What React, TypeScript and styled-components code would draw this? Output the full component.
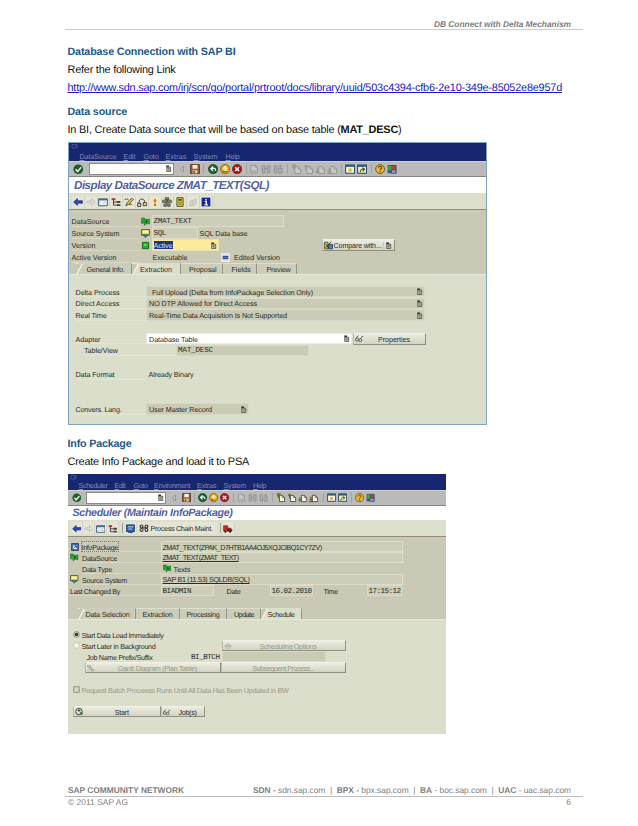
import { ReactNode, useLayoutEffect, useRef, useState } from "react";
import styled, { createGlobalStyle, css } from "styled-components";

const App = () => {
  return (
    <Page>
      <GlobalStyle />
      <Header>
        <Fit w={137}>DB Connect with Delta Mechanism</Fit>
      </Header>
      <Main>
        <Heading $mt={12.8}>
          <Fit w={168}>Database Connection with SAP BI</Fit>
        </Heading>
        <Paragraph>
          <Fit w={108}>Refer the following Link</Fit>
        </Paragraph>
        <Paragraph>
          <Link href="#">
            <Fit w={494.5}>
              http://www.sdn.sap.com/irj/scn/go/portal/prtroot/docs/library/uuid/503c4394-cfb6-2e10-349e-85052e8e957d
            </Fit>
          </Link>
        </Paragraph>
        <Heading $mt={6}>
          <Fit w={59.5}>Data source</Fit>
        </Heading>
        <Paragraph>
          <Fit w={334}>
            In BI, Create Data source that will be based on base table (<b>MAT_DESC</b>)
          </Fit>
        </Paragraph>
        <DataSourceScreen />
        <Heading $mt={9.9}>
          <Fit w={64}>Info Package</Fit>
        </Heading>
        <Paragraph>
          <Fit w={181.5}>Create Info Package and load it to PSA</Fit>
        </Paragraph>
        <SchedulerScreen />
      </Main>
      <Footer>
        <FooterTop>
          <b>
            <Fit w={116}>SAP COMMUNITY NETWORK</Fit>
          </b>
          <Fit w={318}>
            <b>SDN - </b>sdn.sap.com&nbsp; |&nbsp; <b>BPX - </b>bpx.sap.com&nbsp; |&nbsp; <b>BA</b> -
            boc.sap.com&nbsp; |&nbsp; <b>UAC</b> - uac.sap.com
          </Fit>
        </FooterTop>
        <FooterBottom>
          <Fit w={60}>© 2011 SAP AG</Fit>
          <span>6</span>
        </FooterBottom>
      </Footer>
    </Page>
  );
};

/* Tracks its text out or in so that it fills the given width */
const Fit = ({ w, ml, children }: { w: number; ml?: number; children: ReactNode }) => {
  const ref = useRef<HTMLSpanElement>(null);
  const [spacing, setSpacing] = useState<number>(0);
  useLayoutEffect(() => {
    const el = ref.current;
    if (!el) return;
    const count = (el.textContent || "").length;
    setSpacing((w - el.getBoundingClientRect().width) / count);
  }, [w]);
  return (
    <FitText ref={ref} $ml={ml} style={{ letterSpacing: `${spacing}px` }}>
      {children}
    </FitText>
  );
};

const MenuBar = ({ items, height, left }: { items: [string, number, number][]; height: number; left: number }) => (
  <Menu $h={height}>
    <WindowMark $h={height - 9}>
      <Icon name="window" size={8} />
    </WindowMark>
    <MenuItems $left={left}>
      {items.map(([label, w, gap]) => (
        <Fit key={label} w={w} ml={gap}>
          <u>{label[0]}</u>
          {label.slice(1)}
        </Fit>
      ))}
    </MenuItems>
  </Menu>
);

type BarProps = { slot: number; check: number; input: number; arrow: number; gaps: number[]; pages: string };

const CommandBar = ({ slot, check, input, arrow, gaps, pages }: BarProps) => (
  <Bar>
    <Slot $w={check}>
      <Icon name="check" size={slot - 1.5} />
    </Slot>
    <CommandInput $w={input}>
      <Icon name="list" size={7} />
    </CommandInput>
    <Slot $w={arrow}>
      <Icon name="triangle" size={8} />
    </Slot>
    <Slot $w={9}>
      <Icon name="save" size={slot - 2} />
    </Slot>
    {[
      ["back", "exit", "cancel"],
      ["print", "find", "findNext"],
      [pages + "First", pages + "Prev", pages + "Next", pages + "Last"],
      ["session", "shortcut"],
      ["help", "layout"],
    ].map((group, i) => (
      <Group key={i} $ml={gaps[i]}>
        {group.map((name) => (
          <Slot key={name} $w={slot}>
            <Icon name={name} size={slot - 1.8} />
          </Slot>
        ))}
      </Group>
    ))}
  </Bar>
);

const DataSourceScreen = () => (
  <Screen $w={419} $h={283} $mt={2} $framed>
    <MenuBar
      height={18}
      left={11}
      items={[
        ["DataSource", 37, 0],
        ["Edit", 12, 7],
        ["Goto", 15, 8],
        ["Extras", 21, 7],
        ["System", 24, 7],
        ["Help", 14, 8],
      ]}
    />
    <CommandBar slot={12} check={20} input={85} arrow={17} gaps={[7.5, 5, 6.5, 5.5, 6.5]} pages="dim" />
    <Title $h={16} $size={11.6}>
      <Fit w={195} ml={5.5}>
        Display DataSource ZMAT_TEXT(SQL)
      </Fit>
    </Title>
    <ToolBar $h={17}>
      {["left", "rightDim", "table", "tree", "pencil", "lock", "bang", "network", "calc", "ghost", "info"].map((name) => (
        <ToolSlot key={name} $w={12.8}>
          <Icon name={name} size={10} />
        </ToolSlot>
      ))}
    </ToolBar>
    <Form $h={63.5} $pt={5}>
      <Row $h={12}>
        <Label $ml={3} $w={68}>
          <Fit w={38}>DataSource</Fit>
        </Label>
        <Slot $w={12}>
          <Icon name="source" size={9} />
        </Slot>
        <Field $w={132}>
          <Mono>
            <Fit w={38}>ZMAT_TEXT</Fit>
          </Mono>
        </Field>
      </Row>
      <Row $h={12}>
        <Label $ml={3} $w={68}>
          <Fit w={48}>Source System</Fit>
        </Label>
        <Slot $w={12}>
          <Icon name="system" size={9} />
        </Slot>
        <Field $w={46}>
          <Mono>
            <Fit w={12.5}>SQL</Fit>
          </Mono>
        </Field>
        <Fit w={48} ml={2}>
          SQL Data base
        </Fit>
      </Row>
      <Row $h={12}>
        <Label $ml={3} $w={68}>
          <Fit w={24}>Version</Fit>
        </Label>
        <Slot $w={12}>
          <Icon name="active" size={9} />
        </Slot>
        <Field $w={67} $tone="edit">
          <Selected>
            <Fit w={19}>Active</Fit>
          </Selected>
          <Icon name="list" size={7} />
        </Field>
        <Button $w={73} $ml={103} $h={12}>
          <Icon name="compare" size={9} />
          <Fit w={48}>Compare with...</Fit>
          <ListButton>
            <Icon name="list" size={7} />
          </ListButton>
        </Button>
      </Row>
      <Row $h={12}>
        <Label $ml={3} $w={68}>
          <Fit w={45}>Active Version</Fit>
        </Label>
        <Fit w={35} ml={13}>
          Executable
        </Fit>
        <Slot $w={12} $ml={32}>
          <Icon name="edited" size={9} />
        </Slot>
        <Fit w={46} ml={2.5}>
          Edited Version
        </Fit>
      </Row>
      <Tabs $pl={7}>
        <Tab $w={56} $pl={11} $slant>
          <Fit w={38}>General Info.</Fit>
        </Tab>
        <Tab $w={49} $pl={8.5} $slant $active>
          <Fit w={32}>Extraction</Fit>
        </Tab>
        <Tab $w={42} $pl={8.5}>
          <Fit w={27.5}>Proposal</Fit>
        </Tab>
        <Tab $w={34} $pl={9}>
          <Fit w={19}>Fields</Fit>
        </Tab>
        <Tab $w={40} $pl={10}>
          <Fit w={24}>Preview</Fit>
        </Tab>
      </Tabs>
    </Form>
    <Panel $pt={11}>
      <Row $h={11.75}>
        <Label $ml={7} $w={70}>
          <Fit w={44}>Delta Process</Fit>
        </Label>
        <Field $w={279} $tone="dark" $pl={5.5}>
          <Fit w={161}>Full Upload (Delta from InfoPackage Selection Only)</Fit>
          <Icon name="list" size={7} />
        </Field>
      </Row>
      <Row $h={11.75}>
        <Label $ml={7} $w={70}>
          <Fit w={44}>Direct Access</Fit>
        </Label>
        <Field $w={279} $tone="dark" $pl={2.5}>
          <Fit w={108}>NO DTP Allowed for Direct Access</Fit>
          <Icon name="list" size={7} />
        </Field>
      </Row>
      <Row $h={11.75}>
        <Label $ml={7} $w={70}>
          <Fit w={31}>Real Time</Fit>
        </Label>
        <Field $w={279} $tone="dark" $pl={2.5}>
          <Fit w={138}>Real-Time Data Acquisition Is Not Supported</Fit>
          <Icon name="list" size={7} />
        </Field>
      </Row>
      <Row $h={11.75} />
      <Row $h={11.75}>
        <Label $ml={7} $w={70}>
          <Fit w={25}>Adapter</Fit>
        </Label>
        <Field $w={206} $tone="white" $pl={2.5}>
          <Fit w={49}>Database Table</Fit>
          <Icon name="list" size={7} />
        </Field>
        <Button $w={73} $ml={1} $h={12}>
          <Icon name="glasses" size={9} />
          <Grow>
            <Fit w={32}>Properties</Fit>
          </Grow>
        </Button>
      </Row>
      <Row $h={11.75}>
        <Label $ml={15.5} $w={92}>
          <Fit w={34}>Table/View</Fit>
        </Label>
        <Field $w={133} $tone="dark">
          <Mono>
            <Fit w={35}>MAT_DESC</Fit>
          </Mono>
        </Field>
      </Row>
      <Row $h={11.75} />
      <Row $h={11.75}>
        <Label $ml={7} $w={70}>
          <Fit w={39}>Data Format</Fit>
        </Label>
        <Fit w={45} ml={3}>
          Already Binary
        </Fit>
      </Row>
      <Row $h={11.75} />
      <Row $h={11.75} />
      <Row $h={11.75}>
        <Label $ml={7} $w={70}>
          <Fit w={46}>Convers. Lang.</Fit>
        </Label>
        <Field $w={103} $tone="dark" $pl={2.5}>
          <Fit w={63}>User Master Record</Fit>
          <Icon name="list" size={7} />
        </Field>
      </Row>
    </Panel>
  </Screen>
);

const SchedulerScreen = () => (
  <Screen $w={378} $h={260} $mt={2.8}>
    <MenuBar
      height={16}
      left={11}
      items={[
        ["Scheduler", 29, 0],
        ["Edit", 11, 7],
        ["Goto", 14, 8],
        ["Environment", 36, 6.5],
        ["Extras", 19, 7],
        ["System", 22.5, 7.5],
        ["Help", 13, 7],
      ]}
    />
    <CommandBar slot={11} check={18} input={80} arrow={16} gaps={[7, 5.5, 6.5, 6.5, 6.5]} pages="page" />
    <Title $h={14} $size={10.7}>
      <Fit w={160} ml={5}>
        Scheduler (Maintain InfoPackage)
      </Fit>
    </Title>
    <ToolBar $h={16.5}>
      {["left", "rightDim", "table", "tree"].map((name) => (
        <ToolSlot key={name} $w={12}>
          <Icon name={name} size={9.5} />
        </ToolSlot>
      ))}
      <Group $ml={5.5}>
        <ToolSlot $w={12}>
          <Icon name="monitor" size={9} />
        </ToolSlot>
        <ChainButton>
          <Icon name="chain" size={10} />
          <Fit w={62}>Process Chain Maint.</Fit>
        </ChainButton>
      </Group>
      <Group $ml={6}>
        <ToolSlot $w={12}>
          <Icon name="truck" size={9.5} />
        </ToolSlot>
      </Group>
    </ToolBar>
    <Form $h={82} $pt={4.5}>
      <Row $h={11}>
        <Slot $w={14}>
          <Icon name="package" size={8} />
        </Slot>
        <Label $w={79}>
          <Focused>
            <Fit w={36.5}>InfoPackage</Fit>
          </Focused>
        </Label>
        <Field $w={242}>
          <Fit w={159}>ZMAT_TEXT(ZPAK_D7HTB1AA4OJ5XQJCIBQ1CY7ZV)</Fit>
        </Field>
      </Row>
      <Row $h={11}>
        <Slot $w={14}>
          <Icon name="source" size={8.5} />
        </Slot>
        <Label $w={79}>
          <Fit w={35} ml={0.5}>
            DataSource
          </Fit>
        </Label>
        <Field $w={242}>
          <u>
            <Fit w={76}>ZMAT_TEXT(ZMAT_TEXT)</Fit>
          </u>
        </Field>
      </Row>
      <Row $h={11}>
        <Label $ml={14} $w={79}>
          <Fit w={30} ml={0.5}>
            Data Type
          </Fit>
        </Label>
        <Slot $w={13}>
          <Icon name="source" size={8.5} />
        </Slot>
        <Fit w={17}>Texts</Fit>
      </Row>
      <Row $h={11}>
        <Slot $w={14}>
          <Icon name="system" size={8.5} />
        </Slot>
        <Label $w={79}>
          <Fit w={45} ml={0.5}>
            Source System
          </Fit>
        </Label>
        <Field $w={242}>
          <u>
            <Fit w={87}>SAP B1 (11.53) SQLDB(SQL)</Fit>
          </u>
        </Field>
      </Row>
      <Row $h={11}>
        <Label $ml={2.5} $w={90.5}>
          <Fit w={50}>Last Changed By</Fit>
        </Label>
        <Field $w={53}>
          <Mono>
            <Fit w={28.5}>BIADMIN</Fit>
          </Mono>
        </Field>
        <Fit w={14} ml={13}>
          Date
        </Fit>
        <Field $w={43} $ml={29}>
          <Mono>
            <Fit w={40}>16.02.2010</Fit>
          </Mono>
        </Field>
        <Fit w={14} ml={11}>
          Time
        </Fit>
        <Field $w={35} $ml={29}>
          <Mono>
            <Fit w={32}>17:15:12</Fit>
          </Mono>
        </Field>
      </Row>
      <Tabs $pl={10}>
        <Tab $w={58.5} $pl={8} $slant>
          <Fit w={44}>Data Selection</Fit>
        </Tab>
        <Tab $w={43.5} $pl={6.5}>
          <Fit w={30}>Extraction</Fit>
        </Tab>
        <Tab $w={47} $pl={7}>
          <Fit w={33}>Processing</Fit>
        </Tab>
        <Tab $w={34} $pl={7.5}>
          <Fit w={20}>Update</Fit>
        </Tab>
        <Tab $w={41.5} $pl={7} $slant $active>
          <Fit w={27}>Schedule</Fit>
        </Tab>
      </Tabs>
    </Form>
    <Panel $pt={9.5}>
      <Row $h={11}>
        <Slot $w={14} $ml={2}>
          <Icon name="radioOn" size={7} />
        </Slot>
        <Fit w={82} ml={-2}>
          Start Data Load Immediately
        </Fit>
      </Row>
      <Row $h={11}>
        <Slot $w={14} $ml={2}>
          <Icon name="radioOff" size={7} />
        </Slot>
        <Fit w={74} ml={-2}>
          Start Later in Background
        </Fit>
        <Button $w={124} $ml={66} $h={11} $disabled>
          <Icon name="clockDim" size={8} />
          <Grow>
            <Fit w={57}>Scheduling Options</Fit>
          </Grow>
        </Button>
      </Row>
      <Row $h={11}>
        <Fit w={66} ml={19}>
          Job Name Prefix/Suffix
        </Fit>
        <Mono>
          <Fit w={28.5} ml={38.5}>
            BI_BTCH
          </Fit>
        </Mono>
        <Field $w={104} $ml={2} $tone="dark" />
      </Row>
      <Row $h={11}>
        <Button $w={136.5} $ml={17} $h={11} $disabled>
          <Icon name="gantt" size={8} />
          <Grow>
            <Fit w={79}>Gantt Diagram (Plan Table)</Fit>
          </Grow>
        </Button>
        <Button $w={124.5} $h={11} $disabled>
          <Grow>
            <Fit w={62}>Subsequent Process...</Fit>
          </Grow>
        </Button>
      </Row>
      <Row $h={11} />
      <Row $h={11}>
        <Slot $w={14} $ml={2}>
          <Icon name="checkbox" size={7} />
        </Slot>
        <Dim>
          <Fit w={207} ml={-2}>
            Request Batch Proceess Runs Until All Data Has Been Updated in BW
          </Fit>
        </Dim>
      </Row>
      <Row $h={11} />
      <Row $h={11}>
        <Button $w={88.5} $ml={5} $h={11}>
          <Icon name="clock" size={9} />
          <Grow>
            <Fit w={14}>Start</Fit>
          </Grow>
        </Button>
        <Button $w={44} $h={11}>
          <Icon name="glasses" size={8} />
          <Grow>
            <Fit w={18}>Job(s)</Fit>
          </Grow>
        </Button>
      </Row>
    </Panel>
  </Screen>
);

const page = (stroke: string, fill: string, mark: ReactNode) => (
  <g>
    <path d="M6 4h5l4 4v7H6z" fill={fill} stroke={stroke} strokeWidth="1.3" />
    <path d="M11 4v4h4" fill="none" stroke={stroke} />
    {mark}
  </g>
);

const marks: Record<string, string> = {
  First: "M1 1.5h7M4.5 3v6M2 6l2.5-3L7 6",
  Prev: "M4.5 2v7M2 5l2.5-3L7 5",
  Next: "M3.5 7v7M1 11l2.5 3L6 11",
  Last: "M0 15h7M3.5 6v7M1 10l2.5 3L6 10",
};

const icons: Record<string, ReactNode> = {
  window: <path d="M2 3h8v7H2zM10 5l4-2M10 8h4" fill="none" stroke="#5a68a8" strokeWidth="1.2" />,
  check: (
    <g>
      <circle cx="8" cy="8" r="7.3" fill="#1d5b2c" />
      <path d="M4 8l3 3.5L12.5 5" fill="none" stroke="#d9f2d0" strokeWidth="2.4" />
    </g>
  ),
  list: (
    <g>
      <path d="M3 1h6v4H3z" fill="#33332b" />
      <path d="M4 5h9v10H4z" fill="#d9dac8" stroke="#33332b" strokeWidth="1.6" />
      <path d="M6 8.5h5M6 11.5h5" stroke="#33332b" strokeWidth="1.5" />
    </g>
  ),
  triangle: <path d="M11 2v12L5 8z" fill="#c9c9c9" stroke="#858585" strokeWidth="1.4" />,
  save: (
    <g>
      <path d="M1 1h14v14H1z" fill="#a65b31" stroke="#4a2b1c" strokeWidth="1.4" />
      <path d="M4 1.5h8v6H4z" fill="#f2efdb" />
      <path d="M4 10h8v5H4z" fill="#e2c9a9" />
      <path d="M5.5 11h2v3h-2z" fill="#4a2b1c" />
    </g>
  ),
  back: (
    <g>
      <circle cx="8" cy="8" r="7.3" fill="#17632b" stroke="#123c1c" />
      <path d="M12 10.5c0-4-2-4.5-7-3M8 4L4.5 7.6 8 11" fill="none" stroke="#fff" strokeWidth="2" />
    </g>
  ),
  exit: (
    <g>
      <circle cx="8" cy="8" r="7.3" fill="#e3a513" stroke="#6b4a10" />
      <path d="M4.5 8L8 4l3.5 4M8 5v6h4" fill="none" stroke="#fff8d0" strokeWidth="2" />
      <path d="M4 12h8" stroke="#6b4a10" strokeWidth="1.5" />
    </g>
  ),
  cancel: (
    <g>
      <circle cx="8" cy="8" r="7.3" fill="#b3151c" stroke="#5c1015" />
      <path d="M5 5l6 6M11 5l-6 6" stroke="#fff" strokeWidth="2.2" />
    </g>
  ),
  print: <path d="M3 2h7l3 3v9H3zM10 2v3h3M5 11h6" fill="#c9c9c9" stroke="#8d8d8d" strokeWidth="1.3" />,
  find: <path d="M2 3h4v11H2zM10 3h4v11h-4zM6 7h4M3 9h2M11 9h2" fill="#b3b3b3" stroke="#8d8d8d" strokeWidth="1.4" />,
  findNext: <path d="M2 3h4v11H2zM9 7h5v7H9zM11.5 1v5M9 3.5h5" fill="#b3b3b3" stroke="#8d8d8d" strokeWidth="1.4" />,
  session: (
    <g>
      <path d="M1 1.5h14v13H1z" fill="#f6f6e6" stroke="#244a6d" strokeWidth="1.6" />
      <path d="M1 1.5h14v3H1z" fill="#2b5a86" />
      <path d="M8 6v7M4.5 9.5h7M5.5 7l5 5M10.5 7l-5 5" stroke="#d8b71a" strokeWidth="1.5" />
    </g>
  ),
  shortcut: (
    <g>
      <path d="M1 1.5h14v13H1z" fill="#f0efc0" stroke="#244a6d" strokeWidth="1.6" />
      <path d="M1 1.5h14v3H1z" fill="#2b5a86" />
      <path d="M5 13c0-4 2-5 6-5M8 6l4 2-3 3.5" fill="none" stroke="#55521c" strokeWidth="1.6" />
    </g>
  ),
  help: (
    <g>
      <circle cx="8" cy="8" r="7" fill="#e7b834" stroke="#6b5218" strokeWidth="1.4" />
      <path d="M5.5 6c0-3.4 5.4-3 5 0-.3 1.6-2.5 1.6-2.5 4M8 11.3v1.7" fill="none" stroke="#5a3c0c" strokeWidth="1.7" />
    </g>
  ),
  layout: (
    <g>
      <path d="M1 1.5h14v13H1z" fill="#4a5560" />
      <path d="M2 3h5v7H2z" fill="#2fae44" />
      <path d="M8 3h5v5H8z" fill="#c23a3a" />
      <path d="M7 9h7v6H7z" fill="#8d92c8" stroke="#3a3f78" />
    </g>
  ),
  left: <path d="M1 8l6-5.5V6h8v4H7v3.5z" fill="#2a48c8" stroke="#10206b" />,
  rightDim: <path d="M15 8L9 3v3.5H2v3h7V13z" fill="#dfe1d8" stroke="#b1b5ac" />,
  table: (
    <g>
      <path d="M1 3h14v11H1z" fill="#fbfbf2" stroke="#3b5578" strokeWidth="1.5" />
      <path d="M1 3h14v2.5H1z" fill="#3f679c" />
      <path d="M2 8h2.5M2 11h2.5M7 8h6M7 11h6" stroke="#9cb0be" />
    </g>
  ),
  tree: (
    <g>
      <path d="M1 2h6v3H1z" fill="#b23325" />
      <path d="M4 5v8h5M4 8h5" fill="none" stroke="#222" strokeWidth="1.3" />
      <path d="M9 6.5h6v3H9zM9 11.5h6v3H9z" fill="#4a4238" />
    </g>
  ),
  pencil: (
    <g>
      <path d="M3 14l2-5 7-7 3 2-8 8z" fill="#e6c64b" stroke="#39351f" strokeWidth="1.2" />
      <path d="M1 5c2-3 4-3 6 0M8 13c2-3 4-2 5 0" fill="none" stroke="#39351f" strokeWidth="1.4" />
    </g>
  ),
  lock: (
    <g>
      <path d="M1 10h5v5H1zM10 9h5v5h-5z" fill="#e4dfa0" stroke="#33331f" strokeWidth="1.4" />
      <path d="M3 10c0-6 4-8 7-6s2 3 2 5" fill="none" stroke="#33331f" strokeWidth="1.5" />
    </g>
  ),
  bang: (
    <g>
      <path d="M3 1h10v14H3z" fill="#f3e6b4" />
      <path d="M8 2l2 3-1.2 5H7.2L6 5z" fill="#d9701e" />
      <circle cx="8" cy="12.6" r="1.5" fill="#7e3a10" />
    </g>
  ),
  network: (
    <g>
      <path d="M1 5h6v4H1zM5 1h6v3H5zM9 5h6v4H9zM3 11h4v4H3zM9 11h4v4H9z" fill="#8d866e" stroke="#3c392e" />
      <path d="M8 4v8" stroke="#3c392e" strokeWidth="1.5" />
    </g>
  ),
  calc: (
    <g>
      <path d="M3 1h10v14H3z" fill="#e0c62c" stroke="#44431e" strokeWidth="1.3" />
      <path d="M5 3h6v3H5z" fill="#41633b" />
      <path d="M5 8.5h6M5 11.5h6" stroke="#8a8426" strokeWidth="1.5" />
    </g>
  ),
  ghost: <path d="M3 14V8l4-3v9zM9 14V5l4-2v8z" fill="#d6d8ca" stroke="#b5b7a8" />,
  info: (
    <g>
      <path d="M1 1h14v14H1z" fill="#1527a0" />
      <path d="M8 3v2.2M6 7h2.5v5M5.5 12.5h5.5" fill="none" stroke="#fff" strokeWidth="2.2" />
    </g>
  ),
  source: (
    <g>
      <path d="M1 2h5v2h9v8H9l-3 3v-4H1z" fill="#26a835" stroke="#135c1d" />
      <path d="M8 5.5l4 2.5-4 2.5z" fill="#0e3f17" />
    </g>
  ),
  system: (
    <g>
      <path d="M1 1h14v10H1z" fill="#e9df56" stroke="#4a4a34" strokeWidth="1.5" />
      <path d="M4 3h8v4H4z" fill="#f7f4cf" />
      <path d="M8 15.5L3 10h10z" fill="#2f8f6e" stroke="#27455b" />
    </g>
  ),
  active: (
    <g>
      <path d="M2.5 2.5h11v11h-11z" fill="#1fae32" stroke="#135c1d" strokeWidth="1.5" />
      <path d="M5 5h5v4H5z" fill="#55dd60" />
    </g>
  ),
  edited: (
    <g>
      <path d="M0 0h16v16H0z" fill="#e2e8ea" />
      <path d="M3 5h10v6H3z" fill="#294a80" />
      <path d="M3 8h10" stroke="#8fa9cc" />
    </g>
  ),
  compare: (
    <g>
      <path d="M1 2h6v12H1z" fill="#dfcf3a" stroke="#33331f" strokeWidth="1.3" />
      <path d="M8 6h7v8H8z" fill="#4a7fae" stroke="#1f3147" strokeWidth="1.3" />
      <path d="M3 12L13 1M3 5l5 7" stroke="#1e3a28" strokeWidth="1.5" />
    </g>
  ),
  glasses: (
    <g fill="none" stroke="#3a3a30" strokeWidth="1.3">
      <circle cx="3.5" cy="10" r="2.8" />
      <circle cx="9.5" cy="11" r="2.6" />
      <path d="M2 7.5L5.5 3M10 8.5l3-4.5 2 1" />
    </g>
  ),
  monitor: (
    <g>
      <path d="M1 1.5h14v12H1z" fill="#2f62ae" stroke="#173060" strokeWidth="1.4" />
      <path d="M3 5h10M4 9h7" stroke="#cfe0f6" strokeWidth="1.6" />
      <path d="M4 15h8" stroke="#173060" strokeWidth="1.5" />
    </g>
  ),
  chain: (
    <g fill="none" stroke="#33332b" strokeWidth="1.8">
      <circle cx="4" cy="5.5" r="2.3" />
      <circle cx="4" cy="11" r="2.3" />
      <circle cx="12" cy="5.5" r="2.3" />
      <circle cx="12" cy="11" r="2.3" />
      <path d="M6 8h4" />
    </g>
  ),
  truck: (
    <g>
      <path d="M1 3h7v9H1z" fill="#b3332a" stroke="#5b1a15" />
      <path d="M8 7h5l2 2.5V12H8z" fill="#7c211b" stroke="#3e1411" />
      <circle cx="4" cy="13" r="1.8" fill="#26221c" />
      <circle cx="12" cy="13" r="1.8" fill="#26221c" />
    </g>
  ),
  package: (
    <g>
      <path d="M1 1h14v14H1z" fill="#3d6fb4" stroke="#1b3564" strokeWidth="1.5" />
      <path d="M4 5h8v7H4z" fill="#e8eef8" />
      <path d="M5 11l5-5M7 6h4v4" fill="none" stroke="#1b3564" strokeWidth="1.5" />
    </g>
  ),
  radioOn: (
    <g>
      <circle cx="8" cy="8" r="6.5" fill="#e4e5d8" stroke="#77776c" strokeWidth="1.8" />
      <circle cx="8" cy="8" r="4" fill="#33332b" />
    </g>
  ),
  radioOff: <circle cx="8" cy="8" r="6.5" fill="#f7f7ef" stroke="#bcbca9" strokeWidth="1.5" />,
  checkbox: <path d="M1.5 1.5h13v13h-13z" fill="#d3d5c0" stroke="#8c8d7d" strokeWidth="2" />,
  clock: (
    <g fill="none" stroke="#2f2f27" strokeWidth="1.5">
      <circle cx="7" cy="8" r="5.8" />
      <path d="M7 4v4.5M4.5 6h5" />
      <path d="M9 8l6 3-5 4z" fill="#2b7a35" stroke="none" />
    </g>
  ),
  clockDim: (
    <g fill="none" stroke="#a3a493" strokeWidth="1.4">
      <circle cx="8" cy="8" r="4.5" />
      <path d="M0 8h16M8 6v3" />
    </g>
  ),
  gantt: <path d="M1 3h6v3H1zM4 7h6v3H4zM8 11h6v3H8z" fill="#d8d9ca" stroke="#989988" strokeWidth="1.2" />,
};

Object.keys(marks).forEach((key) => {
  icons["page" + key] = page("#37352a", "#f4f3e4", <path d={marks[key]} fill="none" stroke="#6d6718" strokeWidth="2" />);
  icons["dim" + key] = page("#8d8d8a", "#c9c9c9", <path d={marks[key]} fill="none" stroke="#8d8d80" strokeWidth="1.3" />);
});

const Icon = ({ name, size }: { name: string; size: number }) => (
  <Svg width={size} height={size} viewBox="0 0 16 16">
    {icons[name]}
  </Svg>
);

const GlobalStyle = createGlobalStyle`
  * {
    box-sizing: border-box;
  }
  body {
    margin: 0;
    background: #ffffff;
  }
`;
const Page = styled.div`
  display: flex;
  flex-direction: column;
  width: 638px;
  height: 826px;
  overflow: hidden;
  font-family: "Liberation Sans", Arial, sans-serif;
  text-rendering: geometricPrecision;
`;
const Header = styled.header`
  display: flex;
  justify-content: flex-end;
  height: 30px;
  margin: 0 55px 0 65px;
  padding: 19px 12px 0 0;
  border-bottom: 1px solid #cccccc;

  font-size: 8.4px;
  font-style: italic;
  font-weight: 700;
  line-height: 10px;
  color: #7d7d7d;
`;
const Main = styled.main`
  flex: 1;
  padding-left: 67.5px;
`;
const Heading = styled.h2<{ $mt: number }>`
  height: 18px;
  margin: ${({ $mt }) => $mt}px 0 0;

  font-size: 10.7px;
  font-weight: 700;
  line-height: 18px;
  color: #20598c;
`;
const Paragraph = styled.p`
  height: 18.3px;
  margin: 0;

  font-size: 10.9px;
  line-height: 18.3px;
  color: #111111;
`;
const Link = styled.a`
  color: #1a1acc;
`;
const FitText = styled.span<{ $ml?: number }>`
  flex: none;
  margin-left: ${({ $ml }) => $ml || 0}px;
  white-space: nowrap;
`;
const Svg = styled.svg`
  display: block;
  flex: none;
`;
const Footer = styled.footer`
  height: 41px;
  margin: 0 55px 0 65px;

  font-size: 8.4px;
  line-height: 11px;
  color: #808080;
`;
const FooterTop = styled.div`
  display: flex;
  justify-content: space-between;
  height: 12px;
  padding: 0 12px 0 3px;
  border-bottom: 1px solid #bdbdbd;
`;
const FooterBottom = styled.div`
  display: flex;
  justify-content: space-between;
  padding: 0 12px 0 3px;
`;

/* SAP window */
const Screen = styled.section<{ $w: number; $h: number; $mt: number; $framed?: boolean }>`
  display: flex;
  flex-direction: column;
  width: ${({ $w }) => $w}px;
  height: ${({ $h }) => $h}px;
  margin-top: ${({ $mt }) => $mt}px;
  overflow: hidden;
  border: ${({ $framed }) => ($framed ? "1px solid #7fa3c2" : "none")};
  background: #dbdeca;

  font-size: 7.2px;
  line-height: 9px;
  color: #2c2c26;

  ${FitText} {
    padding-top: 1px;
  }
`;
const Menu = styled.div<{ $h: number }>`
  flex: none;
  height: ${({ $h }) => $h}px;
  background: #17276f;
  color: #7d88bd;
`;
const WindowMark = styled.div<{ $h: number }>`
  height: ${({ $h }) => $h}px;
  padding-left: 2px;
`;
const MenuItems = styled.div<{ $left: number }>`
  display: flex;
  padding-left: ${({ $left }) => $left}px;
  line-height: 8px;
`;
const Bar = styled.div`
  display: flex;
  align-items: center;
  flex: none;
  height: 16.5px;
  background: #bababa;
  border-top: 1px solid #d0d0d0;
  border-bottom: 1.5px solid #85857f;
`;
const Slot = styled.div<{ $w: number; $ml?: number }>`
  display: flex;
  justify-content: center;
  align-items: center;
  flex: none;
  width: ${({ $w }) => $w}px;
  margin-left: ${({ $ml }) => $ml || 0}px;
`;
const CommandInput = styled.div<{ $w: number }>`
  display: flex;
  justify-content: flex-end;
  align-items: center;
  flex: none;
  width: ${({ $w }) => $w}px;
  height: 12.5px;
  padding-right: 1px;
  background: #ffffff;
  border: 1px solid #8a8a8a;
`;
const Group = styled.div<{ $ml: number }>`
  display: flex;
  align-items: center;
  flex: none;
  padding-left: ${({ $ml }) => $ml}px;
  background: linear-gradient(#a2a39a, #a2a39a) ${({ $ml }) => $ml / 2}px 50% / 1px 10px no-repeat;
`;
const Title = styled.div<{ $h: number; $size: number }>`
  display: flex;
  align-items: center;
  flex: none;
  height: ${({ $h }) => $h}px;
  background: #ffffff;

  font-size: ${({ $size }) => $size}px;
  font-style: italic;
  font-weight: 700;
  color: #5362a3;
`;
const ToolBar = styled.div<{ $h: number }>`
  display: flex;
  align-items: center;
  flex: none;
  height: ${({ $h }) => $h}px;
  padding-top: 1px;
  padding-left: 3.5px;
  background: #dcdfcc;
  border-bottom: 1px solid #8d8e80;
`;
const ToolSlot = styled(Slot)`
  height: 12px;
  background: #e4e5d7;
  border-right: 1px solid #d3d5c1;
`;
const ChainButton = styled.div`
  display: flex;
  align-items: center;
  gap: 2px;
  width: 80px;
  height: 12px;
  padding-left: 2px;
  background: #e3e4d6;
`;
const Form = styled.div<{ $h: number; $pt: number }>`
  display: flex;
  flex-direction: column;
  flex: none;
  height: ${({ $h }) => $h}px;
  padding-top: ${({ $pt }) => $pt}px;
  background: #c9c9b6;
`;
const Panel = styled.div<{ $pt: number }>`
  flex: 1;
  padding-top: ${({ $pt }) => $pt}px;
  background: #dbdeca;
  border-top: 1px solid #e6e7d9;
`;
const Row = styled.div<{ $h: number }>`
  display: flex;
  align-items: center;
  flex: none;
  height: ${({ $h }) => $h}px;
`;
const Label = styled.div<{ $w: number; $ml?: number }>`
  display: flex;
  align-items: center;
  flex: none;
  width: ${({ $w }) => $w}px;
  height: 100%;
  margin-left: ${({ $ml }) => $ml || 0}px;
  box-shadow: inset 0 -1px rgba(238, 238, 222, 0.45);
`;
const tones = {
  plain: css`
    background: #cdceb9;
    border: 1px solid #dddcc9;
  `,
  dark: css`
    background: #cacbb4;
    border: 1px solid #d9dac6;
  `,
  edit: css`
    background: #fdeb9c;
    border: 1px solid #e6dfb0;
  `,
  white: css`
    background: #ffffff;
    border: 1px solid #ecede0;
  `,
};
const Field = styled.div<{ $w: number; $ml?: number; $pl?: number; $tone?: keyof typeof tones }>`
  display: flex;
  justify-content: space-between;
  align-items: center;
  flex: none;
  width: ${({ $w }) => $w}px;
  height: calc(100% - 0.5px);
  margin-left: ${({ $ml }) => $ml || 0}px;
  padding: 0 1px 0 ${({ $pl }) => $pl || 1}px;
  ${({ $tone }) => tones[$tone || "plain"]}
`;
const Mono = styled.span`
  display: flex;
  padding-top: 2px;
  font-family: "Liberation Mono", "Courier New", monospace;
  font-size: 7.6px;
`;
const Selected = styled.span`
  display: flex;
  height: 8px;
  background: #1d3478;
  color: #dfe4f5;
  line-height: 8px;
`;
const Focused = styled.span`
  display: flex;
  height: 9px;
  outline: 1px dotted #77776a;
`;
const Button = styled.button<{ $w: number; $h: number; $ml?: number; $disabled?: boolean }>`
  display: flex;
  align-items: center;
  gap: 1px;
  flex: none;
  width: ${({ $w }) => $w}px;
  height: ${({ $h }) => $h}px;
  margin-left: ${({ $ml }) => $ml || 0}px;
  padding: 0 1px;
  border: 1px solid;
  border-color: #f1f1e6 #8f907f #8f907f #b9baa8;
  background: linear-gradient(#ecede2, #d2d4c2);

  font: inherit;
  color: ${({ $disabled }) => ($disabled ? "#989989" : "#2c2c26")};
`;
const ListButton = styled.span`
  display: flex;
  margin-left: auto;
  padding: 0 1px;
  border-left: 1px solid #c3c4b4;
`;
const Grow = styled.span`
  display: flex;
  justify-content: center;
  flex: 1;
`;
const Dim = styled.span`
  display: flex;
  color: #97988a;
`;
const Tabs = styled.div<{ $pl: number }>`
  display: flex;
  height: 10.5px;
  margin-top: auto;
  padding-left: ${({ $pl }) => $pl}px;
`;
const Tab = styled.div<{ $w: number; $pl: number; $slant?: boolean; $active?: boolean }>`
  display: flex;
  align-items: center;
  flex: none;
  width: ${({ $w }) => $w}px;
  padding-top: 1px;
  padding-left: ${({ $pl }) => $pl}px;
  border-top: 1px solid #dedfcd;
  border-right: 1px solid #96978a;
  background: ${({ $active }) => ($active ? "#dbdeca" : "#cccdb9")};
  ${({ $slant, $active }) =>
    $slant &&
    css`
      border-top-color: transparent;
      background: linear-gradient(
        118deg,
        #c6c7b4 4.5px,
        #efefe3 5px,
        #efefe3 6px,
        ${$active ? "#dbdeca" : "#cccdb9"} 6.5px
      );
    `}
`;

export default App;
